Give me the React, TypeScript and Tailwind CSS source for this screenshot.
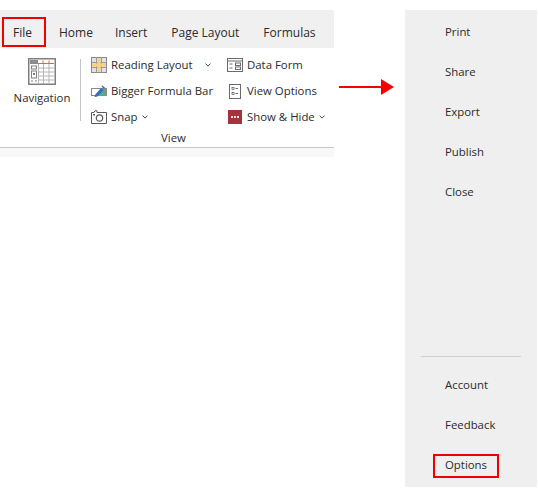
const tabs = [
  { label: "Home", className: "" },
  { label: "Insert", className: "ml-[22px]" },
  { label: "Page Layout", className: "ml-[24px]" },
  { label: "Formulas", className: "ml-[24px]" },
];
const topItems = ["Print", "Share", "Export", "Publish", "Close"];

function Chevron({ className }: { className?: string }) {
  return (
    <svg width="6" height="4" viewBox="0 0 6 4" className={className}>
      <path d="M0.5 0.6 L3 3.1 L5.5 0.6" fill="none" stroke="#444" strokeWidth="1" />
    </svg>
  );
}

function NavigationIcon() {
  return (
    <svg width="28" height="27" viewBox="0 0 28 27">
      <rect x="0.75" y="0.75" width="26.5" height="25.5" fill="#fff" stroke="#7f7f7f" strokeWidth="1.5" />
      <rect x="2" y="2" width="8" height="4" fill="#8c8c8c" />
      <path d="M10 5.5 H26" stroke="#d9674f" strokeWidth="1" />
      <path d="M15 2.5 V5 M21 2.5 V5" stroke="#d9674f" strokeWidth="1" />
      <path d="M10.5 6 V25 M15.5 6 V25 M21 6 V25 M11 10 H26 M11 14 H26 M11 18 H26 M11 22 H26" stroke="#b5b5b5" strokeWidth="1" />
      <rect x="3.5" y="8" width="5" height="3" fill="none" stroke="#7f7f7f" />
      <rect x="3.5" y="13" width="5" height="7" fill="none" stroke="#7f7f7f" />
      <rect x="5" y="15" width="2" height="2" fill="#7f7f7f" />
      <path d="M3 23 H5 M7 23 H9" stroke="#7f7f7f" strokeWidth="1" />
    </svg>
  );
}

function ReadingIcon() {
  return (
    <svg width="16" height="16" viewBox="0 0 16 16">
      <rect x="0.5" y="0.5" width="15" height="15" fill="#e2e2e2" stroke="#8a8a8a" />
      <path d="M0.5 5.5 H15.5 M0.5 10.5 H15.5 M5.5 0.5 V15.5 M10.5 0.5 V15.5" stroke="#9a9a9a" strokeWidth="1" />
      <path d="M1 8 H15 M8 1 V15" stroke="#f7d282" strokeWidth="3" />
    </svg>
  );
}

function FormulaIcon() {
  return (
    <svg width="16" height="14" viewBox="0 0 16 14">
      <rect x="0.5" y="4.5" width="15" height="7" fill="#fff" stroke="#8a8a8a" />
      <path d="M10 5 L15 5 L15 11 L8 11 Z" fill="#5aa68a" />
      <path d="M4 11 L10 4 L12.5 6 L6.5 12.5 L3.5 13 Z" fill="#2a70c4" />
      <path d="M11 2 L13.5 4.2" stroke="#2a70c4" strokeWidth="1.5" />
    </svg>
  );
}

function SnapIcon() {
  return (
    <svg width="16" height="14" viewBox="0 0 16 14">
      <path d="M0.5 2.5 H3 L4 0.8 H6 V2.5 H15.5 V13.5 H0.5 Z" fill="#fff" stroke="#5a5a5a" />
      <circle cx="8.5" cy="8" r="3.2" fill="none" stroke="#5a5a5a" strokeWidth="1.2" />
      <rect x="2" y="4" width="2" height="1.5" fill="#5a5a5a" />
    </svg>
  );
}

function DataFormIcon() {
  return (
    <svg width="16" height="14" viewBox="0 0 16 14">
      <rect x="0.5" y="0.5" width="15" height="13" fill="#fff" stroke="#6a6a6a" />
      <path d="M1 3 H15" stroke="#6a6a6a" strokeWidth="1" />
      <path d="M2.5 6 H5.5 M2.5 10 H5.5" stroke="#6a6a6a" strokeWidth="1" />
      <rect x="8.5" y="5" width="5" height="2.5" fill="none" stroke="#6a6a6a" />
      <rect x="8.5" y="9" width="5" height="2.5" fill="none" stroke="#6a6a6a" />
    </svg>
  );
}

function ViewOptionsIcon() {
  return (
    <svg width="16" height="15" viewBox="0 0 16 15">
      <rect x="2.5" y="0.5" width="11" height="14" fill="#fff" stroke="#6a6a6a" />
      <rect x="5" y="3.5" width="2" height="2" fill="none" stroke="#6a6a6a" strokeWidth="0.8" />
      <rect x="5" y="8.5" width="2" height="2" fill="none" stroke="#6a6a6a" strokeWidth="0.8" />
      <path d="M8.5 4.5 H11 M8.5 9.5 H11" stroke="#6a6a6a" strokeWidth="1" />
    </svg>
  );
}

function ShowHideIcon() {
  return (
    <svg width="16" height="14" viewBox="0 0 16 14">
      <rect x="1" y="0" width="14" height="14" fill="#a4343c" />
      <rect x="4" y="6" width="2" height="2" fill="#f5dcdc" />
      <rect x="7" y="6" width="2" height="2" fill="#f5dcdc" />
      <rect x="10" y="6" width="2" height="2" fill="#f5dcdc" />
    </svg>
  );
}

function RibbonButton({ icon, label, chevron }: { icon: React.ReactNode; label: string; chevron?: React.ReactNode }) {
  return (
    <div className="flex h-[26px] items-center">
      <span className="flex w-[16px] justify-center">{icon}</span>
      <span className="ml-[4px] whitespace-nowrap">{label}</span>
      {chevron}
    </div>
  );
}

function Ribbon() {
  return (
    <div className="w-[334px] shrink-0">
      <div className="flex h-[38px] items-end bg-[#f0f0f0] pl-[2px] text-[12px]">
        <div className="mb-[1px] flex h-[30px] w-[44px] items-center justify-center border-2 border-[#f00000] pr-[3px] pt-[2px]">File</div>
        <div className="mb-[1px] ml-[13px] flex h-[30px] items-center pt-[2px]">
          {tabs.map((t) => (
            <span key={t.label} className={`whitespace-nowrap ${t.className}`}>{t.label}</span>
          ))}
        </div>
      </div>
      <div className="flex h-[99px] flex-col bg-white">
        <div className="flex pt-[4px]">
          <div className="flex w-[80px] flex-col items-center pl-[4px] pt-[6px]">
            <NavigationIcon />
            <span className="mt-[4px]">Navigation</span>
          </div>
          <div className="mt-[7px] h-[62px] w-px bg-[#c6c6c6]" />
          <div className="ml-[10px] w-[136px]">
            <RibbonButton icon={<ReadingIcon />} label="Reading Layout" chevron={<Chevron className="ml-[12px]" />} />
            <RibbonButton icon={<FormulaIcon />} label="Bigger Formula Bar" />
            <RibbonButton icon={<SnapIcon />} label="Snap" chevron={<Chevron className="ml-[4px]" />} />
          </div>
          <div>
            <RibbonButton icon={<DataFormIcon />} label="Data Form" />
            <RibbonButton icon={<ViewOptionsIcon />} label="View Options" />
            <RibbonButton icon={<ShowHideIcon />} label="Show & Hide" chevron={<Chevron className="ml-[4px]" />} />
          </div>
        </div>
        <div className="pl-[161px] leading-[16px]">View</div>
      </div>
      <div className="h-[10px] border-t border-[#c8c8c8] bg-[#f8f8f8]" />
    </div>
  );
}

function Arrow() {
  return (
    <svg width="56" height="18" viewBox="0 0 56 18" className="ml-[5px] mt-[68px] shrink-0">
      <path d="M0 9 H44" stroke="#f80000" strokeWidth="2" />
      <path d="M42 1 L55 9 L42 17 Z" fill="#f80000" />
    </svg>
  );
}

function BackstageItem({ label }: { label: string }) {
  return <div className="flex h-[40px] items-center pl-[40px]">{label}</div>;
}

function Backstage() {
  return (
    <div className="ml-[10px] flex h-[477px] w-[132px] shrink-0 flex-col bg-[#efefef] pt-[2px]">
      {topItems.map((t) => (
        <BackstageItem key={t} label={t} />
      ))}
      <div className="mx-[16px] mt-auto h-px bg-[#cfcfcf]" />
      <div className="mt-[8px] pb-[2px]">
        <BackstageItem label="Account" />
        <BackstageItem label="Feedback" />
        <div className="mb-[7px] ml-[28px] mt-[9px] flex h-[24px] w-[66px] items-center border-2 border-[#f00000] pb-[2px] pl-[10px]">Options</div>
      </div>
    </div>
  );
}

export default function App() {
  return (
    <div className="flex h-[490px] w-[539px] items-start overflow-hidden bg-white pt-[10px] font-['Open_Sans',sans-serif] text-[11.4px] text-[#2b2b2b]">
      <Ribbon />
      <Arrow />
      <Backstage />
    </div>
  );
}
